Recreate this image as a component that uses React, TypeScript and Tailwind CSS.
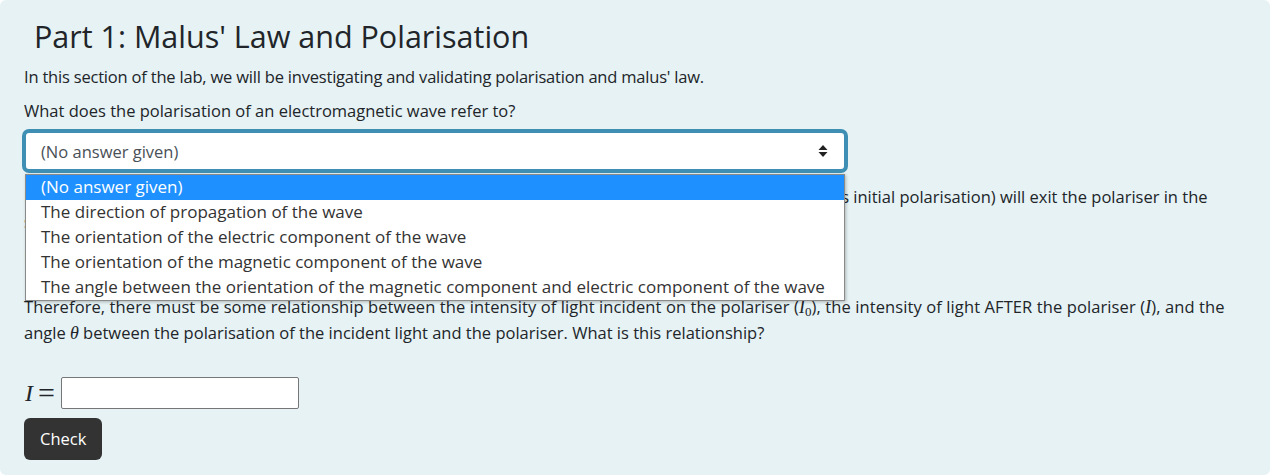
import React from "react";

const font = { fontFamily: '"Segoe UI", "Open Sans", "Noto Sans", sans-serif' };

function MathI({ sub }: { sub?: string }) {
  return (
    <span className="font-['Liberation_Serif',serif] italic text-[18px]">
      I
      {sub && <sub className="not-italic text-[13px] align-baseline relative top-[3px]">{sub}</sub>}
    </span>
  );
}

const options = [
  "(No answer given)",
  "The direction of propagation of the wave",
  "The orientation of the electric component of the wave",
  "The orientation of the magnetic component of the wave",
  "The angle between the orientation of the magnetic component and electric component of the wave",
];

export default function App() {
  return (
    <div className="bg-white w-[1272px] h-[475px]" style={font}>
      <div className="relative w-[1270px] h-[475px] bg-[#e6f2f4] rounded-[6px] px-6 pt-[14px] text-[16.5px] text-[#212529]">
        <h1 className="ml-[10px] text-[30.5px] leading-[44px] text-[#212529]">Part 1: Malus' Law and Polarisation</h1>
        <p className="mt-[7px] leading-[24px] tracking-[-0.2px]">
          In this section of the lab, we will be investigating and validating polarisation and malus' law.
        </p>
        <p className="mt-[10px] leading-[24px]">What does the polarisation of an electromagnetic wave refer to?</p>

        <div className="relative mt-[6px]">
          <div className="ml-[-2px] w-[826px] h-[44px] rounded-[7px] border-[4px] border-[#3e8fb3] bg-white flex items-center pl-[15px] pr-[15px] text-[#495057]">
            <span className="flex-1 pt-[3px]">(No answer given)</span>
            <svg width="10" height="14" viewBox="0 0 10 14" className="mr-[1px]">
              <path d="M5 1 L9.5 6 H0.5 Z" fill="#222" />
              <path d="M5 13 L9.5 8 H0.5 Z" fill="#222" />
            </svg>
          </div>

          <div className="absolute left-[1px] top-[45px] w-[820px] bg-white border border-[#8a8a8a] shadow-[1px_1px_3px_rgba(0,0,0,0.25)] z-10">
            {options.map((o, i) => (
              <div
                key={o}
                className={
                  "h-[25px] leading-[24px] pl-[15px] text-[17px] " +
                  (i === 0 ? "bg-[#1e90ff] text-white" : "text-[#333]")
                }
              >
                {o}
              </div>
            ))}
          </div>
        </div>

        <p className="mt-[11px] leading-[25px]">
          <span className="block whitespace-nowrap">
            Light that is incident on a polariser (regardless of the orientation of that polariser relative to the light wave's initial polarisation) will exit the polariser in the
          </span>
          <span className="block">same orientation as the polariser's axis.</span>
        </p>
        <p className="mt-[10px] leading-[25px]">However, the light's intensity may be reduced as it passes through.</p>
        <p className="mt-[25px] leading-[26px]">
          <span className="block whitespace-nowrap tracking-[0.1px]">
            Therefore, there must be some relationship between the intensity of light incident on the polariser (<MathI sub="0" />), the intensity of
            light AFTER the polariser (<MathI />), and the
          </span>
          <span className="block">
            angle <span className="font-['Liberation_Serif',serif] italic text-[18px]">θ</span> between the polarisation of the incident light and the
            polariser. What is this relationship?
          </span>
        </p>

        <div className="mt-[31px] flex items-center gap-[6px]">
          <span className="ml-[1px] flex items-center gap-[5px] font-['Liberation_Serif',serif] leading-none">
            <span className="italic text-[24px]">I</span>
            <span className="text-[30px]">=</span>
          </span>
          <div className="w-[238px] h-[32px] bg-white border border-[#767676] rounded-[2px]" />
        </div>

        <button className="mt-[9px] h-[42px] px-[16px] bg-[#333333] text-white rounded-[6px] text-[16.5px]">Check</button>
      </div>
    </div>
  );
}
